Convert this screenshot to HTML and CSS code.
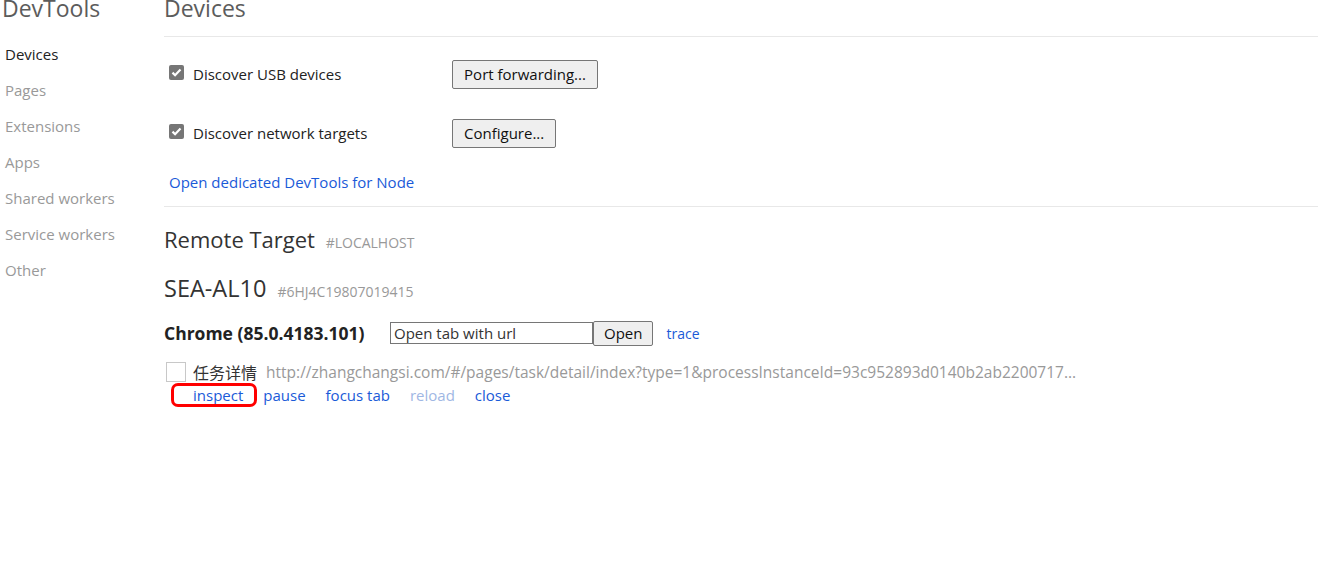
FILE: index.html
```html
<!DOCTYPE html>
<html lang="en">
<head>
    <meta charset="UTF-8">
    <title>Inspect with Chrome Developer Tools</title>
    <link rel="stylesheet" href="styles.css">
</head>
<body>

    <div class="page">
        <!-- Sidebar navigation -->
        <div class="sidebar">
            <h1 class="app-title">DevTools</h1>
            <ul class="nav">
                <li class="nav-item selected">Devices</li>
                <li class="nav-item">Pages</li>
                <li class="nav-item">Extensions</li>
                <li class="nav-item">Apps</li>
                <li class="nav-item">Shared workers</li>
                <li class="nav-item">Service workers</li>
                <li class="nav-item">Other</li>
            </ul>
        </div>

        <div class="content">
            <h1 class="page-title">Devices</h1>

            <!-- Discovery settings -->
            <div class="settings">
                <div class="setting-row">
                    <label class="check-label">
                        <span class="checkbox checked"></span>
                        Discover USB devices
                    </label>
                    <button class="btn btn-wide">Port forwarding...</button>
                </div>
                <div class="setting-row">
                    <label class="check-label">
                        <span class="checkbox checked"></span>
                        Discover network targets
                    </label>
                    <button class="btn btn-configure">Configure...</button>
                </div>
                <a class="link node-link" href="#">Open dedicated DevTools for Node</a>
            </div>

            <!-- Remote targets -->
            <div class="targets">
                <h2 class="section-title">Remote Target <span class="section-id">#LOCALHOST</span></h2>
                <h2 class="device-title">SEA-AL10 <span class="section-id">#6HJ4C19807019415</span></h2>

                <div class="browser-row">
                    <span class="browser-name">Chrome (85.0.4183.101)</span>
                    <input class="url-input" type="text" value="Open tab with url">
                    <button class="btn btn-open">Open</button>
                    <a class="link trace-link" href="#">trace</a>
                </div>

                <div class="target">
                    <div class="target-head">
                        <span class="favicon"></span>
                        <span class="target-name">任务详情</span>
                        <span class="target-url">http://zhangchangsi.com/#/pages/task/detail/index?type=1&amp;processInstanceId=93c952893d0140b2ab2200717...</span>
                    </div>
                    <div class="actions">
                        <a class="link action highlighted" href="#">inspect</a>
                        <a class="link action" href="#">pause</a>
                        <a class="link action" href="#">focus tab</a>
                        <a class="link action disabled" href="#">reload</a>
                        <a class="link action" href="#">close</a>
                    </div>
                </div>
            </div>
        </div>
    </div>

</body>
</html>
```

FILE: styles.css
```css
body {
    font-family: 'Open Sans', 'Noto Sans CJK SC', sans-serif;
    background-color: #fff;
    color: #333;
    margin: 0;
    font-size: 14px;
}
.page {
    display: flex;
    height: 568px;
    overflow: hidden;
}
.sidebar {
    width: 164px;
    flex-shrink: 0;
}
.app-title,
.page-title {
    font-size: 23px;
    font-weight: normal;
    color: #5c5c5c;
    line-height: 24px;
    margin: -4px 0 0 0;
}
.app-title {
    padding-left: 2px;
}
.nav {
    list-style: none;
    margin: 16px 0 0 0;
    padding: 0;
}
.nav-item {
    font-size: 15px;
    line-height: 36px;
    padding-left: 5px;
    color: #999;
}
.nav-item.selected {
    color: #222;
}
.content {
    flex: 1;
}
.page-title {
    padding-bottom: 16px;
    border-bottom: 1px solid #e8e8e8;
}
.settings {
    padding: 22px 0 14px 5px;
    border-bottom: 1px solid #e8e8e8;
}
.setting-row {
    display: flex;
    align-items: center;
    height: 30px;
    margin-bottom: 29px;
}
.check-label {
    display: flex;
    align-items: center;
    width: 283px;
    font-size: 15px;
    color: #222;
}
.checkbox {
    width: 15px;
    height: 15px;
    border-radius: 2px;
    margin-right: 9px;
    margin-top: -3px;
    box-sizing: border-box;
}
.checkbox.checked {
    background: #767676 url("data:image/svg+xml,%3Csvg xmlns='http://www.w3.org/2000/svg' viewBox='0 0 15 15'%3E%3Cpath d='M3.5 7.6l2.6 2.6 5.4-5.6' fill='none' stroke='%23fff' stroke-width='2.2'/%3E%3C/svg%3E") no-repeat center;
}
.btn {
    font-family: inherit;
    font-size: 15px;
    color: #111;
    background-color: #efefef;
    border: 1px solid #767676;
    border-radius: 2px;
    height: 29px;
    padding: 0 8px;
}
.btn-wide {
    width: 146px;
}
.btn-configure {
    padding: 0 11px;
}
.link {
    color: #1a5ad8;
    text-decoration: none;
}
.node-link {
    display: block;
    font-size: 15px;
    margin-top: -5px;
}
.targets {
    padding-top: 17px;
}
.section-title,
.device-title {
    font-size: 22px;
    font-weight: normal;
    color: #333;
    margin: 0;
    line-height: 30px;
}
.device-title {
    font-size: 23.5px;
    margin-top: 15px;
}
.section-id {
    font-size: 14px;
    color: #999;
    margin-left: 5px;
}
.browser-row {
    display: flex;
    align-items: center;
    margin-top: 13px;
    height: 26px;
}
.browser-name {
    font-size: 17.5px;
    font-weight: bold;
    color: #222;
    width: 226px;
    white-space: nowrap;
}
.url-input {
    font-family: inherit;
    font-size: 15px;
    color: #333;
    width: 203px;
    height: 22px;
    box-sizing: border-box;
    border: 1px solid #767676;
    padding: 0 3px;
}
.btn-open {
    height: 25px;
    padding: 0 10px;
    margin-right: 13px;
}
.target {
    margin-top: 15px;
}
.target-head {
    display: flex;
    align-items: center;
    height: 22px;
    padding-left: 2px;
}
.favicon {
    width: 20px;
    height: 20px;
    box-sizing: border-box;
    border: 1px solid #c8c8c8;
    margin-right: 7px;
}
.target-name {
    font-size: 16px;
    color: #333;
    margin-right: 9px;
}
.target-url {
    font-size: 15.5px;
    color: #999;
    white-space: nowrap;
}
.actions {
    display: flex;
    align-items: center;
    gap: 20px;
    padding-left: 10px;
    height: 22px;
    margin-top: 1px;
}
.action {
    font-size: 15px;
    line-height: 22px;
}
.action.disabled {
    color: #9fb7e4;
}
.highlighted {
    line-height: 18px;
    outline: 3px solid #f00;
    border-radius: 4px;
    padding: 0 11px 0 19px;
    margin-right: -11px;
}
```
